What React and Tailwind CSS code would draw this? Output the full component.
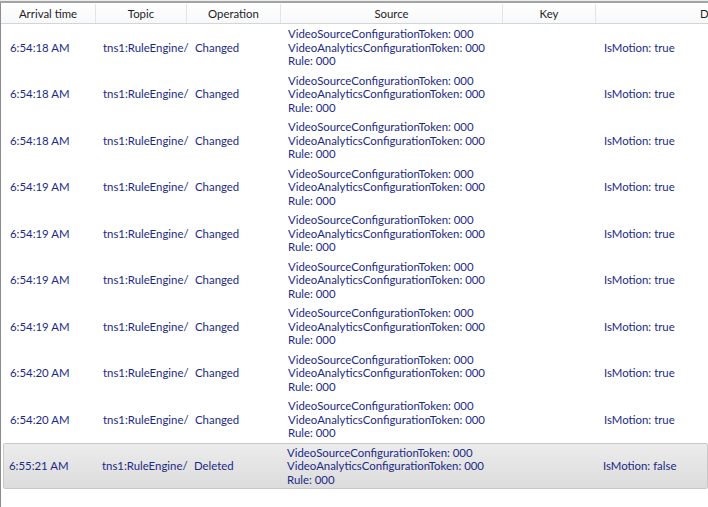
const rows = [
  { time: "6:54:18 AM", op: "Changed", data: "IsMotion: true" },
  { time: "6:54:18 AM", op: "Changed", data: "IsMotion: true" },
  { time: "6:54:18 AM", op: "Changed", data: "IsMotion: true" },
  { time: "6:54:19 AM", op: "Changed", data: "IsMotion: true" },
  { time: "6:54:19 AM", op: "Changed", data: "IsMotion: true" },
  { time: "6:54:19 AM", op: "Changed", data: "IsMotion: true" },
  { time: "6:54:19 AM", op: "Changed", data: "IsMotion: true" },
  { time: "6:54:20 AM", op: "Changed", data: "IsMotion: true" },
  { time: "6:54:20 AM", op: "Changed", data: "IsMotion: true" },
  { time: "6:55:21 AM", op: "Deleted", data: "IsMotion: false", selected: true },
];

function Row({ row }) {
  return (
    <div
      className={
        "flex h-[46.5px] items-center text-[#1b2a86] " +
        (row.selected
          ? "ml-[2px] rounded-[2px] border border-[#c9c9c9] bg-gradient-to-b from-[#ececec] to-[#dcdcdc]"
          : "ml-[3px] border border-transparent")
      }
    >
      <div className="w-[93px] shrink-0 overflow-hidden pl-[5px]">{row.time}</div>
      <div className="w-[91px] shrink-0 overflow-hidden pl-[5px]">tns1:RuleEngine/</div>
      <div className="w-[94px] shrink-0 overflow-hidden pl-[6px]">{row.op}</div>
      <div className="w-[222px] shrink-0 overflow-hidden pl-[5px] leading-[13.5px]">
        <div>VideoSourceConfigurationToken: 000</div>
        <div>VideoAnalyticsConfigurationToken: 000</div>
        <div>Rule: 000</div>
      </div>
      <div className="w-[93px] shrink-0" />
      <div className="flex-1 pl-[6px]">{row.data}</div>
    </div>
  );
}

export default function App() {
  return (
    <div
      className="h-[507px] w-[708px] overflow-hidden bg-white text-[11.4px]"
      style={{ fontFamily: 'Lato, "Noto Sans", sans-serif' }}
    >
      <div className="h-[1px] bg-[#ececec]" />
      <div className="h-[2px] bg-[#a3a3a3]" />
      <div className="flex h-[calc(100%-3px)] border-l border-[#8c8c8c]">
        <div className="flex-1 overflow-hidden">
          <div className="flex h-[21px] border-b border-[#d5d5d5] bg-gradient-to-b from-white to-[#f7f8fa] pt-[1px] text-[#1e1e1e] whitespace-nowrap">
            <div className="flex w-[95px] shrink-0 items-center justify-center border-r border-[#e3e4e6]">Arrival time</div>
            <div className="flex w-[91px] shrink-0 items-center justify-center border-r border-[#e3e4e6]">Topic</div>
            <div className="flex w-[94px] shrink-0 items-center justify-center border-r border-[#e3e4e6]">Operation</div>
            <div className="flex w-[222px] shrink-0 items-center justify-center border-r border-[#e3e4e6]">Source</div>
            <div className="flex w-[93px] shrink-0 items-center justify-center border-r border-[#e3e4e6]">Key</div>
            <div className="flex w-[232px] shrink-0 items-center justify-center">Data</div>
          </div>
          <div className="whitespace-nowrap">
            {rows.map((r, i) => (
              <Row key={i} row={r} />
            ))}
          </div>
        </div>
      </div>
    </div>
  );
}
